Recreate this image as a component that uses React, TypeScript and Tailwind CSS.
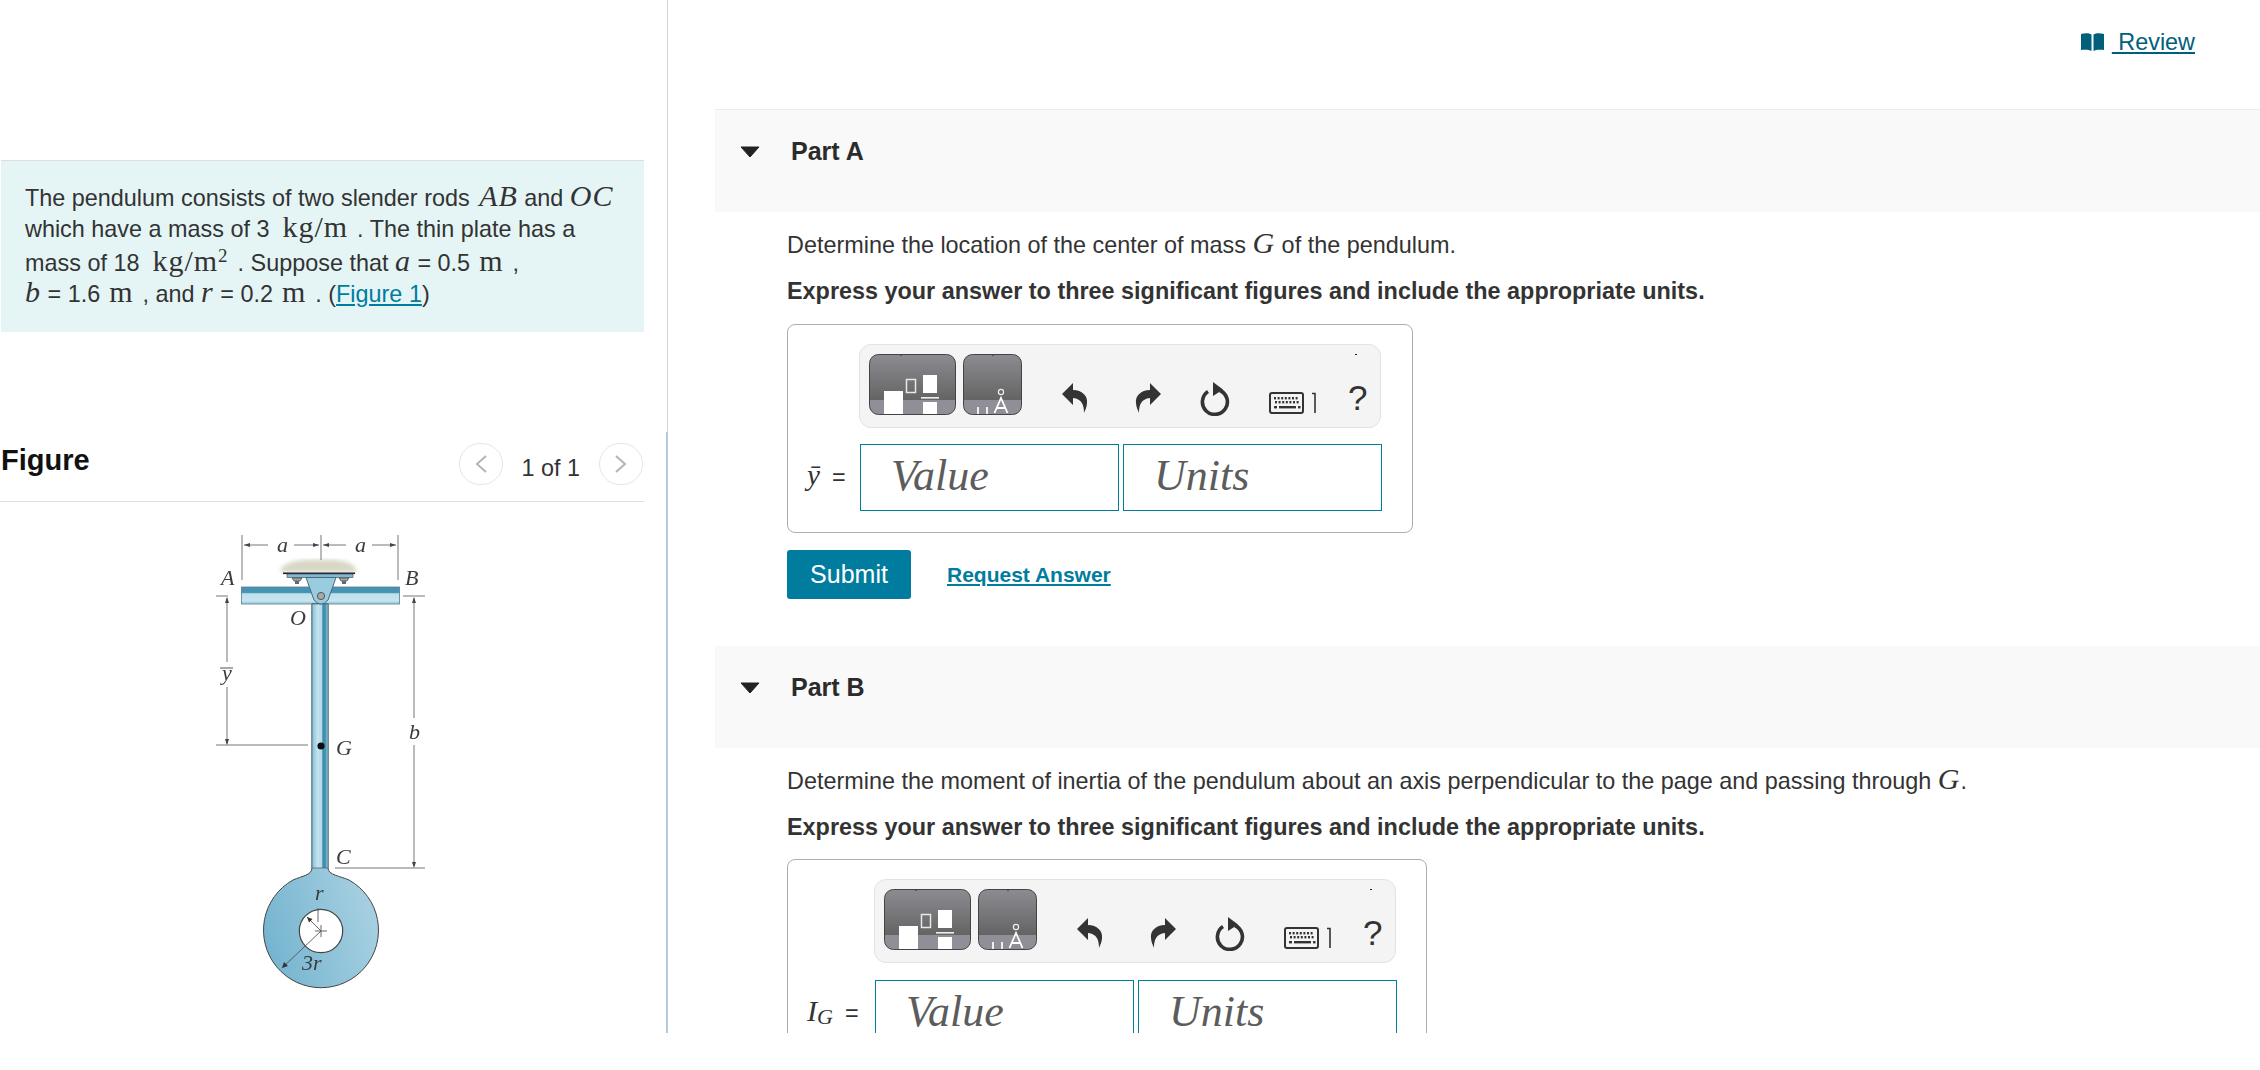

import React from "react";

const Kg = ({ children }: { children: React.ReactNode }) => (
  <span className="font-['Liberation_Serif',serif] text-[30px] leading-[0px] tracking-[1px] ml-[13px] mr-[9px]">{children}</span>
);
const M = () => (
  <span className="font-['Liberation_Serif',serif] text-[30px] leading-[0px] tracking-[1px] mx-[9px]">m</span>
);
const I = ({ children }: { children: React.ReactNode }) => (
  <span className="font-['Liberation_Serif',serif] italic text-[30px] leading-[0px] tracking-[1px]">{children}</span>
);

function Undo({ flip }: { flip?: boolean }) {
  return (
    <svg width="26" height="30" viewBox="0 0 26 30" className={flip ? "-scale-x-100" : ""}>
      <path d="M0 11 L11 0 V7 C20 7 26 13 25 20 C25 24 23 27 22 30 C22 22 20 16 11 15 V22 Z" fill="#333" />
    </svg>
  );
}

function Refresh() {
  return (
    <svg width="32" height="34" viewBox="0 0 32 34">
      <path d="M9 9.5 A12.5 12.5 0 1 0 21 8.5" fill="none" stroke="#333" strokeWidth="3.6" />
      <path d="M14 0 L24 7.5 L14 14 Z" fill="#333" />
    </svg>
  );
}

function Keyboard() {
  const dots: React.ReactNode[] = [];
  for (let i = 0; i < 7; i++) dots.push(<rect key={"a" + i} x={5 + i * 3.6} y={5} width="2" height="2.4" fill="#333" />);
  for (let i = 0; i < 7; i++) dots.push(<rect key={"b" + i} x={6 + i * 3.6} y={9} width="2" height="2.4" fill="#333" />);
  return (
    <svg width="48" height="22" viewBox="0 0 48 22">
      <rect x="1" y="1" width="33" height="20" rx="2" fill="#f4f4f4" stroke="#333" strokeWidth="2" />
      {dots}
      <rect x="5" y="14" width="3" height="2.4" fill="#333" />
      <rect x="10" y="14" width="17" height="2.4" fill="#333" />
      <rect x="29" y="14" width="2.5" height="2.4" fill="#333" />
      <path d="M43 1.5 H46 V21" fill="none" stroke="#333" strokeWidth="1.6" />
    </svg>
  );
}

function TemplateBtn() {
  return (
    <svg width="87" height="61" viewBox="0 0 87 61" className="shrink-0">
      <defs>
        <linearGradient id="tb1" x1="0" y1="0" x2="0" y2="1">
          <stop offset="0" stopColor="#8d8c92" />
          <stop offset="1" stopColor="#646464" />
        </linearGradient>
        <clipPath id="tc1"><rect x="0.5" y="0.5" width="86" height="60" rx="9" /></clipPath>
      </defs>
      <g clipPath="url(#tc1)">
        <rect width="87" height="46" fill="url(#tb1)" />
        <rect y="46" width="87" height="15" fill="#908e96" />
        <rect x="15" y="37" width="19" height="24" fill="#fff" />
        <rect x="37.5" y="25.5" width="9" height="13" fill="none" stroke="#e8e8e8" strokeWidth="1.5" />
        <rect x="54" y="21" width="14" height="18" fill="#fff" />
        <rect x="52" y="43" width="18" height="1.6" fill="#eee" />
        <rect x="54" y="48" width="14" height="13" fill="#fff" />
        <rect x="31" y="0" width="2" height="1.5" fill="#222" />
      </g>
      <rect x="0.5" y="0.5" width="86" height="60" rx="9" fill="none" stroke="#444" />
    </svg>
  );
}

function SymbolBtn() {
  return (
    <svg width="59" height="61" viewBox="0 0 59 61" className="shrink-0">
      <defs>
        <linearGradient id="sb1" x1="0" y1="0" x2="0" y2="1">
          <stop offset="0" stopColor="#8d8c92" />
          <stop offset="1" stopColor="#646464" />
        </linearGradient>
        <clipPath id="sc1"><rect x="0.5" y="0.5" width="58" height="60" rx="9" /></clipPath>
      </defs>
      <g clipPath="url(#sc1)">
        <rect width="59" height="46" fill="url(#sb1)" />
        <rect y="46" width="59" height="15" fill="#908e96" />
        <circle cx="38" cy="38" r="2.6" fill="none" stroke="#eee" strokeWidth="1.2" />
        <path d="M31.5 59 L38 44 L44.5 59 M34 54 H42" fill="none" stroke="#fff" strokeWidth="1.8" />
        <rect x="14" y="53" width="2" height="8" fill="#eee" />
        <rect x="23" y="53" width="2" height="8" fill="#eee" />
        <rect x="29" y="0" width="2" height="1.5" fill="#222" />
      </g>
      <rect x="0.5" y="0.5" width="58" height="60" rx="9" fill="none" stroke="#444" />
    </svg>
  );
}

function Toolbar({ cls }: { cls: string }) {
  return (
    <div className={`${cls} relative w-[522px] h-[84px] bg-[#f4f4f4] border border-[#e2e2e2] rounded-[12px] flex items-start pl-[9px] pt-[9px]`}>
      <TemplateBtn />
      <div className="ml-[7px]"><SymbolBtn /></div>
      <div className="ml-[40px] mt-[29px]"><Undo /></div>
      <div className="ml-[47px] mt-[29px]"><Undo flip /></div>
      <div className="ml-[38px] mt-[28px]"><Refresh /></div>
      <div className="ml-[38px] mt-[38px]"><Keyboard /></div>
      <div className="ml-[31px] mt-[22px] text-[35px] leading-[44px] text-[#333] font-['Liberation_Sans',sans-serif]">?</div>
      <span className="absolute left-[495px] top-[9px] w-[2px] h-[1px] bg-[#222]" />
    </div>
  );
}

function AnswerBox({ label, w, indent, col, gap, h }: { label: React.ReactNode; w: string; indent: string; col: string; gap: string; h: string }) {
  return (
    <div className={`${w} ${h} border border-[#adadad] rounded-[8px] pt-[19px] shrink-0`}>
      <Toolbar cls={indent} />
      <div className={`flex items-center ${gap}`}>
        <div className={`${col} shrink-0 pl-[19px] whitespace-nowrap`}>{label}</div>
        <div className="w-[259px] h-[67px] border border-[#007c9e] pl-[30px] font-['Liberation_Serif',serif] italic text-[44px] leading-[62px] text-[#5c5c5c]">Value</div>
        <div className="w-[259px] h-[67px] ml-[4px] border border-[#007c9e] pl-[30px] font-['Liberation_Serif',serif] italic text-[44px] leading-[62px] text-[#5c5c5c]">Units</div>
      </div>
    </div>
  );
}

function PartHeader({ name }: { name: string }) {
  return (
    <div className="h-[102px] bg-[#f9f9f9] flex items-start pl-[25px] pt-[23px]">
      <svg width="20" height="12" viewBox="0 0 20 12" className="mt-[13px]"><path d="M1 1 H19 L10 11 Z" fill="#222" stroke="#222" strokeLinejoin="round" /></svg>
      <span className="ml-[31px] font-bold text-[25px] leading-[36px] text-[#2b2b2b]">{name}</span>
    </div>
  );
}

function Pendulum() {
  const serif = "'Liberation Serif', serif";
  const lab = { fontFamily: serif, fontStyle: "italic", fontSize: 22, fill: "#3a3a3a" } as const;
  return (
    <svg width="260" height="490" viewBox="0 0 260 490" className="block">
      <defs>
        <filter id="bl"><feGaussianBlur stdDeviation="0.55" /></filter>
        <filter id="bl2"><feGaussianBlur stdDeviation="2.2" /></filter>
        <linearGradient id="disc" x1="0" y1="1" x2="1" y2="0">
          <stop offset="0" stopColor="#6fb1cd" />
          <stop offset="1" stopColor="#cfe6f0" />
        </linearGradient>
        <linearGradient id="rod" x1="0" y1="0" x2="1" y2="0">
          <stop offset="0" stopColor="#84bfd8" />
          <stop offset="0.35" stopColor="#c6e3ee" />
          <stop offset="0.6" stopColor="#b4d9e8" />
          <stop offset="0.68" stopColor="#3a8bad" />
          <stop offset="0.84" stopColor="#4594b4" />
          <stop offset="1" stopColor="#a8d2e3" />
        </linearGradient>
        <linearGradient id="bar" x1="0" y1="0" x2="0" y2="1">
          <stop offset="0" stopColor="#4594b4" />
          <stop offset="0.32" stopColor="#4594b4" />
          <stop offset="0.4" stopColor="#bfe0ec" />
          <stop offset="0.8" stopColor="#c8e4ef" />
          <stop offset="1" stopColor="#94c7dc" />
        </linearGradient>
      </defs>
      <path d="M90 52 C92 42 110 39 130 40 C150 39 165 42 167 52 Z" fill="#d8d6c4" filter="url(#bl2)" />
      <g filter="url(#bl)">
        <g stroke="#777" strokeWidth="1" fill="none">
          <path d="M52 15 V60 M131 15 V40 M208 15 V60" />
          <path d="M54 25 H78 M104 25 H129 M133 25 H156 M182 25 H206" />
          <path d="M26 76 H38 M213 76 H235" />
          <path d="M37 78 V142 M37 167 V224 M26 225 H118" />
          <path d="M224 78 V198 M224 225 V346 M145 348 H235" />
        </g>
        <path d="M54 25 l6 -2 v4 Z M129 25 l-6 -2 v4 Z M133 25 l6 -2 v4 Z M206 25 l-6 -2 v4 Z M37 77 l-2 6 h4 Z M37 225 l-2 -6 h4 Z M224 77 l-2 6 h4 Z M224 348 l-2 -6 h4 Z" fill="#444" />
        <rect x="51.5" y="67" width="158" height="17" fill="url(#bar)" stroke="#5d7d8b" strokeWidth="0.8" />
        <rect x="93" y="52.5" width="72" height="1.6" fill="#222" />
        <rect x="97" y="54" width="66" height="3.5" fill="#7fbad2" stroke="#445" strokeWidth="0.6" />
        <path d="M102 58 h10 l-2 3 h-6 Z M149 58 h10 l-2 3 h-6 Z" fill="#9aa" stroke="#444" strokeWidth="0.7" />
        <rect x="105" y="61" width="4" height="3" fill="#667" />
        <rect x="152" y="61" width="4" height="3" fill="#667" />
        <path d="M122 84 V348 C122 355 112 356 103 360 A57.5 57.5 0 1 0 159 360 C150 356 138 355 138 348 V84 Z" fill="url(#disc)" stroke="#444" strokeWidth="1" />
        <rect x="122" y="84" width="16" height="264" fill="url(#rod)" stroke="#4d6c7a" strokeWidth="0.8" />
        <path d="M116 57.5 H146 L138 80 Q131 88 124 80 Z" fill="#9accdf" stroke="#4a6a78" strokeWidth="1" />
        <circle cx="131" cy="76" r="3.6" fill="#a6a9a8" stroke="#555" />
        <circle cx="131" cy="226" r="3.6" fill="#111" />
        <circle cx="131" cy="411" r="21.7" fill="#fff" stroke="#444" strokeWidth="1.2" />
        <path d="M131 411 L92 448 M131 411 L117 397 M128 388 V402 M125 411 H137 M131 405 V417" stroke="#555" strokeWidth="0.9" fill="none" />
        <path d="M92 448 l2 -6 l4 4 Z M117 397 l5.5 2 l-3.5 3.5 Z" fill="#333" />
        <path d="M30 148 H43" stroke="#555" strokeWidth="1" />
        <text x="31" y="65" style={lab}>A</text>
        <text x="215" y="65" style={lab}>B</text>
        <text x="100" y="105" style={lab}>O</text>
        <text x="87" y="32" style={lab}>a</text>
        <text x="165" y="32" style={lab}>a</text>
        <text x="32" y="160" style={lab}>y</text>
        <text x="219" y="219" style={lab}>b</text>
        <text x="146" y="235" style={lab}>G</text>
        <text x="146" y="344" style={lab}>C</text>
        <text x="125" y="380" style={lab}>r</text>
        <text x="112" y="450" style={lab}>3r</text>
      </g>
    </svg>
  );
}

export default function App() {
  return (
    <div className="w-[2260px] h-[1070px] bg-white overflow-hidden font-['Liberation_Sans',Arial,sans-serif] text-[23.4px] text-[#333]">
      <div className="flex h-[1033px] overflow-hidden">
        <aside className="w-[668px] shrink-0 flex flex-col">
          <div className="h-[432px] shrink-0 border-r border-[#ccd6e1] pt-[160px]">
            <div className="ml-[1px] w-[643px] h-[172px] bg-[#e5f5f6] border-t border-[#dedede] pl-[24px] pt-[22px] whitespace-nowrap">
              <div className="h-[31px] leading-[31px]">The pendulum consists of two slender rods <span className="ml-[3px]"><I>AB</I></span> and <I>OC</I></div>
              <div className="h-[34px] leading-[31px]">which have a mass of 3<Kg>kg/m</Kg>. The thin plate has a</div>
              <div className="h-[31px] leading-[31px]">mass of 18<Kg>kg/m<sup className="text-[19px] leading-[0px]">2</sup></Kg>. Suppose that <I>a</I> = 0.5<M />,</div>
              <div className="h-[31px] leading-[31px]"><I>b</I> = 1.6<M />, and <I>r</I> = 0.2<M />. (<a className="text-[#007c9e] underline">Figure 1</a>)</div>
            </div>
          </div>
          <div className="flex-1 border-r-2 border-[#b5c8dd]">
            <div className="w-[644px] h-[70px] border-b border-[#dfdfdf] flex items-start">
              <span className="ml-[1px] mt-[11px] font-bold text-[29px] leading-[34px] text-[#111]">Figure</span>
              <div className="ml-auto mt-[11px] mr-[1px] flex items-start">
                <span className="w-[44px] h-[42px] rounded-full border border-[#e6e6e6] flex items-center justify-center">
                  <svg width="14" height="20" viewBox="0 0 14 20"><path d="M12 2 L3 10 L12 18" fill="none" stroke="#b5b5b5" strokeWidth="2" /></svg>
                </span>
                <span className="ml-[18px] mt-[8px] leading-[34px]">1 of 1</span>
                <span className="ml-[19px] w-[44px] h-[42px] rounded-full border border-[#e6e6e6] flex items-center justify-center">
                  <svg width="14" height="20" viewBox="0 0 14 20"><path d="M2 2 L11 10 L2 18" fill="none" stroke="#b5b5b5" strokeWidth="2" /></svg>
                </span>
              </div>
            </div>
            <div className="ml-[190px] mt-[18px]"><Pendulum /></div>
          </div>
        </aside>

        <main className="flex-1 min-w-0 pl-[47px]">
          <div className="h-[109px] relative">
            <a className="absolute right-[65px] top-[28px] flex items-center text-[#00607a]">
              <svg width="23" height="18" viewBox="0 0 23 18"><path d="M0 1 C4 0 8 0 10.5 1.5 V18 C8 16.5 4 16.5 0 17 Z M23 1 C19 0 15 0 12.5 1.5 V18 C15 16.5 19 16.5 23 17 Z" fill="#00607a" /></svg>
              <span className="ml-[8px] underline leading-[28px] whitespace-pre"> Review</span>
            </a>
          </div>
          <section className="h-[537px] border-t border-[#ececec]">
            <PartHeader name="Part A" />
            <div className="pl-[72px]">
              <p className="mt-[18px] h-[30px] leading-[30px]">Determine the location of the center of mass <I>G</I> of the pendulum.</p>
              <p className="mt-[16px] h-[30px] leading-[30px] font-bold">Express your answer to three significant figures and include the appropriate units.</p>
              <div className="mt-[18px]">
                <AnswerBox
                  w="w-[626px]"
                  h="h-[209px]"
                  indent="ml-[71px]"
                  col="w-[72px]"
                  gap="mt-[16px]"
                  label={<span><span className="font-['Liberation_Serif',serif] italic text-[29px] leading-[0px]">ȳ</span><span className="ml-[12px]">=</span></span>}
                />
              </div>
              <div className="flex items-center mt-[17px]">
                <button className="w-[124px] h-[49px] bg-[#007c9e] rounded-[3px] text-white text-[25px]">Submit</button>
                <a className="ml-[36px] font-bold text-[21px] text-[#007c9e] underline">Request Answer</a>
              </div>
            </div>
          </section>
          <section>
            <PartHeader name="Part B" />
            <div className="pl-[72px]">
              <p className="mt-[18px] h-[30px] leading-[30px]">Determine the moment of inertia of the pendulum about an axis perpendicular to the page and passing through <I>G</I>.</p>
              <p className="mt-[16px] h-[30px] leading-[30px] font-bold">Express your answer to three significant figures and include the appropriate units.</p>
              <div className="mt-[17px]">
                <AnswerBox
                  w="w-[640px]"
                  h="h-[260px]"
                  indent="ml-[86px]"
                  col="w-[87px]"
                  gap="mt-[17px]"
                  label={<span><span className="font-['Liberation_Serif',serif] italic text-[30px] leading-[0px]">I<sub className="text-[22px] leading-[0px] bottom-[-3px]">G</sub></span><span className="ml-[12px]">=</span></span>}
                />
              </div>
            </div>
          </section>
        </main>
      </div>
    </div>
  );
}
